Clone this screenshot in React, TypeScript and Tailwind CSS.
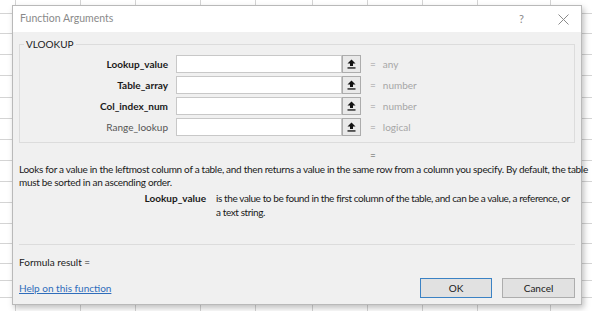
import React from "react";

const font = { fontFamily: '"Segoe UI", Lato, "Noto Sans", sans-serif' };

const args = [
    { name: "Lookup_value", bold: true, type: "any" },
    { name: "Table_array", bold: true, type: "number" },
    { name: "Col_index_num", bold: true, type: "number" },
    { name: "Range_lookup", bold: false, type: "logical" },
];

const cols = [15, 80, 135, 200, 255, 312, 367, 422, 477, 550];
const rows = [13, 33, 54, 75, 97, 118, 139, 160, 181, 202, 223, 243, 263, 280, 297];

function SheetGrid() {
    return (
        <svg className="absolute inset-0" width="592" height="311">
            {cols.map((x) => (
                <line key={"c" + x} x1={x + 0.5} y1={0} x2={x + 0.5} y2={311} stroke="#d4d4d4" />
            ))}
            {rows.map((y) => (
                <line key={"r" + y} x1={0} y1={y + 0.5} x2={592} y2={y + 0.5} stroke="#d4d4d4" />
            ))}
        </svg>
    );
}

function RefButton() {
    return (
        <button className="w-[19px] h-[18px] flex items-center justify-center bg-[#e9e9e9] border border-[#acacac]">
            <svg width="9" height="10" viewBox="0 0 9 10">
                <path d="M4.5 0.5 L8.5 4.5 L6 4.5 L6 7 L3 7 L3 4.5 L0.5 4.5 Z" fill="#111" />
                <rect x="0.5" y="8.3" width="8" height="1.3" fill="#111" />
            </svg>
        </button>
    );
}

function ArgRow({ name, bold, type }: { name: string; bold: boolean; type: string }) {
    return (
        <div className="flex items-center h-[18px]">
            <div
                className={
                    "w-[148px] text-right text-[10px] " +
                    (bold ? "font-bold text-[#1a1a1a]" : "text-[#555]")
                }
            >
                {name}
            </div>
            <div className="ml-[8px] w-[166px] h-[18px] bg-white border border-[#c8c8c8]" />
            <RefButton />
            <span className="ml-[9px] text-[10px] text-[#9a9a9a]">=</span>
            <span className="ml-[7px] text-[10px] text-[#a6a6a6]">{type}</span>
        </div>
    );
}

export default function App() {
    return (
        <div className="relative w-[592px] h-[311px] bg-white overflow-hidden" style={font}>
            <SheetGrid />
            <div className="absolute left-[12px] top-[5px] w-[570px] h-[300px] bg-[#f0f0f0] border border-[#b9b9b9] shadow-[2px_3px_6px_rgba(0,0,0,0.25)] flex flex-col">
                <div className="h-[26px] bg-white flex items-center pl-[7px] pr-[12px] text-[10.5px] text-[#8a8a8a]">
                    <span>Function Arguments</span>
                    <span className="ml-auto text-[11px] text-[#8a8a8a]">?</span>
                    <svg className="ml-[34px]" width="11" height="11" viewBox="0 0 11 11">
                        <path d="M0.5 0.5 L10.5 10.5 M10.5 0.5 L0.5 10.5" stroke="#8a8a8a" strokeWidth="1" />
                    </svg>
                </div>
                <div className="flex-1 flex flex-col px-[6px]">
                    <fieldset className="mt-[5px] border border-[#dcdcdc] pl-0 pr-0 pt-[3px] pb-[6px]">
                        <legend className="ml-[4px] px-[2px] text-[10px] text-[#1a1a1a]">VLOOKUP</legend>
                        <div className="flex flex-col gap-[3px]">
                            {args.map((a) => (
                                <ArgRow key={a.name} {...a} />
                            ))}
                        </div>
                    </fieldset>
                    <div className="mt-[5px] pl-[351px] text-[10px] text-[#555] leading-[14px]">=</div>
                    <div className="mt-[1px] text-[10px] text-[#1a1a1a] leading-[13px] tracking-[-0.3px] whitespace-nowrap">
                        <div>
                            Looks for a value in the leftmost column of a table, and then returns a value in the same row from a column you specify. By default, the table
                        </div>
                        <div>must be sorted in an ascending order.</div>
                    </div>
                    <div className="mt-[2px] flex text-[10px] leading-[14px] text-[#1a1a1a] whitespace-nowrap">
                        <div className="w-[187px] shrink-0 text-right font-bold">Lookup_value</div>
                        <div className="ml-[10px] tracking-[-0.4px]">
                            <div>is the value to be found in the first column of the table, and can be a value, a reference, or</div>
                            <div>a text string.</div>
                        </div>
                    </div>
                    <div className="mt-auto border-t border-[#dcdcdc]" />
                    <div className="mt-[10px] h-[14px] leading-[14px] text-[10px] text-[#1a1a1a]">Formula result =</div>
                    <div className="mt-[9px] mb-[6px] flex items-center">
                        <a className="text-[10px] text-[#2f6dbb] underline">Help on this function</a>
                        <button className="ml-auto w-[72px] h-[20px] bg-[#e1e1e1] border border-[#3b82c4] text-[10px] text-[#1a1a1a]">
                            OK
                        </button>
                        <button className="ml-[10px] w-[73px] h-[20px] bg-[#e1e1e1] border border-[#adadad] text-[10px] text-[#1a1a1a]">
                            Cancel
                        </button>
                    </div>
                </div>
            </div>
        </div>
    );
}
